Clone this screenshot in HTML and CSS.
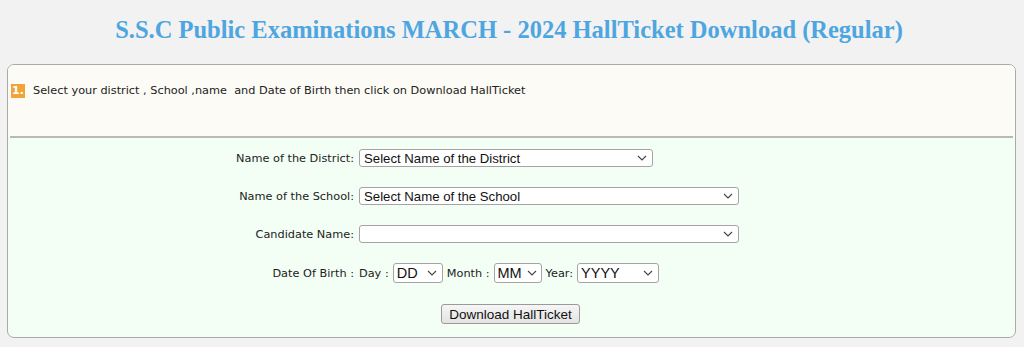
FILE: index.html
```html
<!DOCTYPE html>
<html>
<head>
<meta charset="utf-8">
<link rel="stylesheet" href="styles.css">
</head>
<body>
<h1 class="title">S.S.C Public Examinations MARCH - 2024 HallTicket Download (Regular)</h1>
<div class="card">
  <div class="card-top">
    <div class="instr"><span class="badge">1.</span><span>Select your district , School ,name &nbsp;and Date of Birth then click on Download HallTicket</span></div>
  </div>
  <hr class="sep">
  <div class="card-body">
    <div class="form">
      <label class="lbl">Name of the District:</label>
      <div class="cell"><span class="sel w-district"><select><option>Select Name of the District</option></select><svg class="chev" viewBox="0 0 10 6" width="10" height="6"><path d="M1 1l4 4 4-4" fill="none" stroke="#444" stroke-width="1.1"/></svg></span></div>

      <label class="lbl">Name of the School:</label>
      <div class="cell"><span class="sel w-wide"><select><option>Select Name of the School</option></select><svg class="chev" viewBox="0 0 10 6" width="10" height="6"><path d="M1 1l4 4 4-4" fill="none" stroke="#444" stroke-width="1.1"/></svg></span></div>

      <label class="lbl">Candidate Name:</label>
      <div class="cell"><span class="sel w-wide"><select><option></option></select><svg class="chev" viewBox="0 0 10 6" width="10" height="6"><path d="M1 1l4 4 4-4" fill="none" stroke="#444" stroke-width="1.1"/></svg></span></div>

      <label class="lbl">Date Of Birth :</label>
      <div class="cell dob">
        <span class="txt">Day :</span>
        <span class="sel w-day"><select><option>DD</option></select><svg class="chev" viewBox="0 0 10 6" width="10" height="6"><path d="M1 1l4 4 4-4" fill="none" stroke="#444" stroke-width="1.1"/></svg></span>
        <span class="txt">Month :</span>
        <span class="sel w-month"><select><option>MM</option></select><svg class="chev" viewBox="0 0 10 6" width="10" height="6"><path d="M1 1l4 4 4-4" fill="none" stroke="#444" stroke-width="1.1"/></svg></span>
        <span class="txt">Year:</span>
        <span class="sel w-year"><select><option>YYYY</option></select><svg class="chev" viewBox="0 0 10 6" width="10" height="6"><path d="M1 1l4 4 4-4" fill="none" stroke="#444" stroke-width="1.1"/></svg></span>
      </div>
    </div>
    <div class="actions"><button class="btn">Download HallTicket</button></div>
  </div>
</div>
</body>
</html>
```
FILE: styles.css
```css
* { box-sizing: border-box; }
body {
  margin: 0;
  background: #f2f2f2;
  font-family: "DejaVu Sans", Verdana, sans-serif;
  color: #222;
}
.title {
  margin: 0;
  padding-top: 14px;
  padding-right: 6px;
  margin-bottom: 19px;
  font-family: "Liberation Serif", "Times New Roman", serif;
  font-weight: bold;
  font-size: 24.5px;
  line-height: 31px;
  color: #4ea6e0;
  text-align: center;
}
.card {
  margin: 0 8px 0 7px;
  border: 1px solid #a9aba8;
  border-radius: 7px;
  background: #f3fff5;
  overflow: hidden;
  height: 274px;
}
.card-top {
  background: #fcfbf5;
  height: 71px;
  padding: 19px 0 0 3px;
}
.instr {
  display: flex;
  align-items: center;
  font-size: 11.3px;
  line-height: 14px;
}
.badge {
  display: inline-block;
  width: 14px;
  height: 14px;
  background: #f0a43a;
  color: #fff;
  font-weight: bold;
  font-size: 11px;
  line-height: 14px;
  text-align: center;
  margin-right: 8px;
}
.sep {
  margin: 0 2px;
  border: 0;
  height: 2px;
  background: #b7bab5;
}
.card-body {
  padding-top: 11px;
}
.form {
  display: grid;
  grid-template-columns: 346px auto;
  column-gap: 5px;
  row-gap: 20px;
  align-items: center;
}
.lbl {
  text-align: right;
  font-size: 11.3px;
}
.cell {
  display: flex;
  align-items: center;
  font-size: 11.3px;
}
.dob .txt { margin-right: 4px; }
.dob .sel { margin-right: 4px; }
.sel {
  position: relative;
  display: inline-block;
  height: 18px;
}
.sel select {
  -webkit-appearance: none;
  appearance: none;
  width: 100%;
  height: 100%;
  margin: 0;
  padding: 0 0 0 4px;
  border: 1px solid #a4a4a4;
  border-radius: 3px;
  background: #fff;
  font-family: "Liberation Sans", Arial, sans-serif;
  font-size: 13.2px;
  color: #111;
}
.w-day select, .w-month select, .w-year select { font-size: 14.5px; padding-left: 3px; }
.chev {
  position: absolute;
  right: 6px;
  top: 6px;
  pointer-events: none;
}
.w-day .chev, .w-month .chev, .w-year .chev { top: 7px; }
.w-month .chev { right: 5px; }
.w-district { width: 294px; }
.w-wide { width: 380px; }
.w-day { width: 50px; height: 20px; }
.w-month { width: 48px; height: 20px; }
.w-year { width: 82px; height: 20px; }
.actions {
  display: flex;
  justify-content: center;
  padding-top: 21px;
  padding-right: 2px;
}
.btn {
  width: 139px;
  height: 20px;
  padding: 0;
  border: 1px solid #9a9a9a;
  border-radius: 3px;
  background: linear-gradient(#f6f6f6, #e3e3e3);
  font-family: "Liberation Sans", Arial, sans-serif;
  font-size: 13.5px;
  color: #111;
}
```
